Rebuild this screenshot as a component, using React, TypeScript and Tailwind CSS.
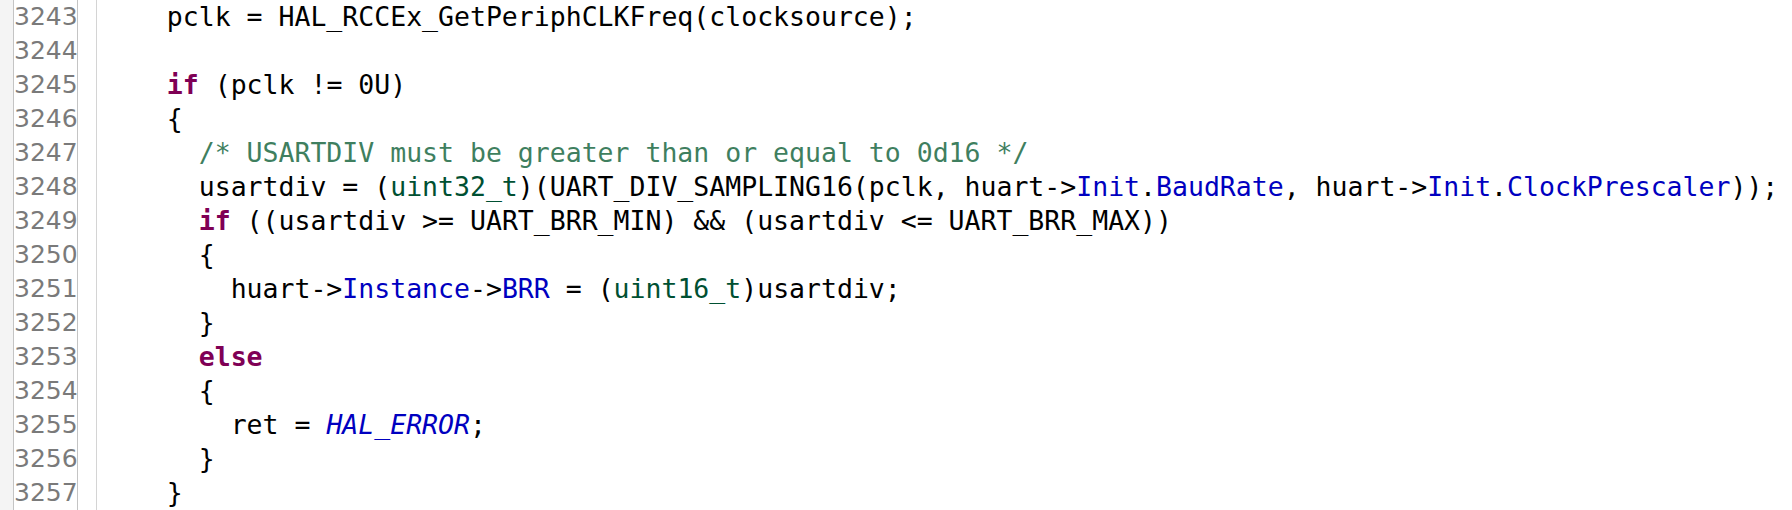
import React from "react";

type Tok = { t: string; c?: "kw" | "cm" | "ty" | "fd" | "en" };

const lines: { n: number; toks: Tok[] }[] = [
  { n: 3243, toks: [{ t: "    pclk = HAL_RCCEx_GetPeriphCLKFreq(clocksource);" }] },
  { n: 3244, toks: [] },
  { n: 3245, toks: [{ t: "    " }, { t: "if", c: "kw" }, { t: " (pclk != 0U)" }] },
  { n: 3246, toks: [{ t: "    {" }] },
  { n: 3247, toks: [{ t: "      " }, { t: "/* USARTDIV must be greater than or equal to 0d16 */", c: "cm" }] },
  {
    n: 3248,
    toks: [
      { t: "      usartdiv = (" },
      { t: "uint32_t", c: "ty" },
      { t: ")(UART_DIV_SAMPLING16(pclk, huart->" },
      { t: "Init", c: "fd" },
      { t: "." },
      { t: "BaudRate", c: "fd" },
      { t: ", huart->" },
      { t: "Init", c: "fd" },
      { t: "." },
      { t: "ClockPrescaler", c: "fd" },
      { t: "));" },
    ],
  },
  {
    n: 3249,
    toks: [
      { t: "      " },
      { t: "if", c: "kw" },
      { t: " ((usartdiv >= UART_BRR_MIN) && (usartdiv <= UART_BRR_MAX))" },
    ],
  },
  { n: 3250, toks: [{ t: "      {" }] },
  {
    n: 3251,
    toks: [
      { t: "        huart->" },
      { t: "Instance", c: "fd" },
      { t: "->" },
      { t: "BRR", c: "fd" },
      { t: " = (" },
      { t: "uint16_t", c: "ty" },
      { t: ")usartdiv;" },
    ],
  },
  { n: 3252, toks: [{ t: "      }" }] },
  { n: 3253, toks: [{ t: "      " }, { t: "else", c: "kw" }] },
  { n: 3254, toks: [{ t: "      {" }] },
  { n: 3255, toks: [{ t: "        ret = " }, { t: "HAL_ERROR", c: "en" }, { t: ";" }] },
  { n: 3256, toks: [{ t: "      }" }] },
  { n: 3257, toks: [{ t: "    }" }] },
];

const tokClass = {
  kw: "font-bold text-[#7f0055]",
  cm: "text-[#3f7f5f]",
  ty: "text-[#005032]",
  fd: "text-[#0000c0]",
  en: "italic text-[#0000c0]",
};

export default function App() {
  return (
    <div className="flex h-[510px] w-[1792px] overflow-hidden bg-white">
      <div className="w-[13px] shrink-0 bg-[#f4f4f4]" />
      <div className="w-[65px] shrink-0 border-x border-[#c4c4c4] bg-white font-['DejaVu_Sans',sans-serif] text-[25px] leading-[34px] text-[#7a7a7a]">
        {lines.map((l) => (
          <div key={l.n} className="h-[34px] pr-px text-right">
            {l.n}
          </div>
        ))}
      </div>
      <div className="w-[18px] shrink-0" />
      <div className="w-px shrink-0 bg-[#d4d4d4]" />
      <div className="flex-1 pl-[6px] font-['DejaVu_Sans_Mono',monospace] text-[26.5px] leading-[34px] text-black">
        {lines.map((l) => (
          <div key={l.n} className="h-[34px] whitespace-pre">
            {l.toks.map((tk, i) => (
              <span key={i} className={tk.c ? tokClass[tk.c] : undefined}>
                {tk.t}
              </span>
            ))}
          </div>
        ))}
      </div>
    </div>
  );
}
